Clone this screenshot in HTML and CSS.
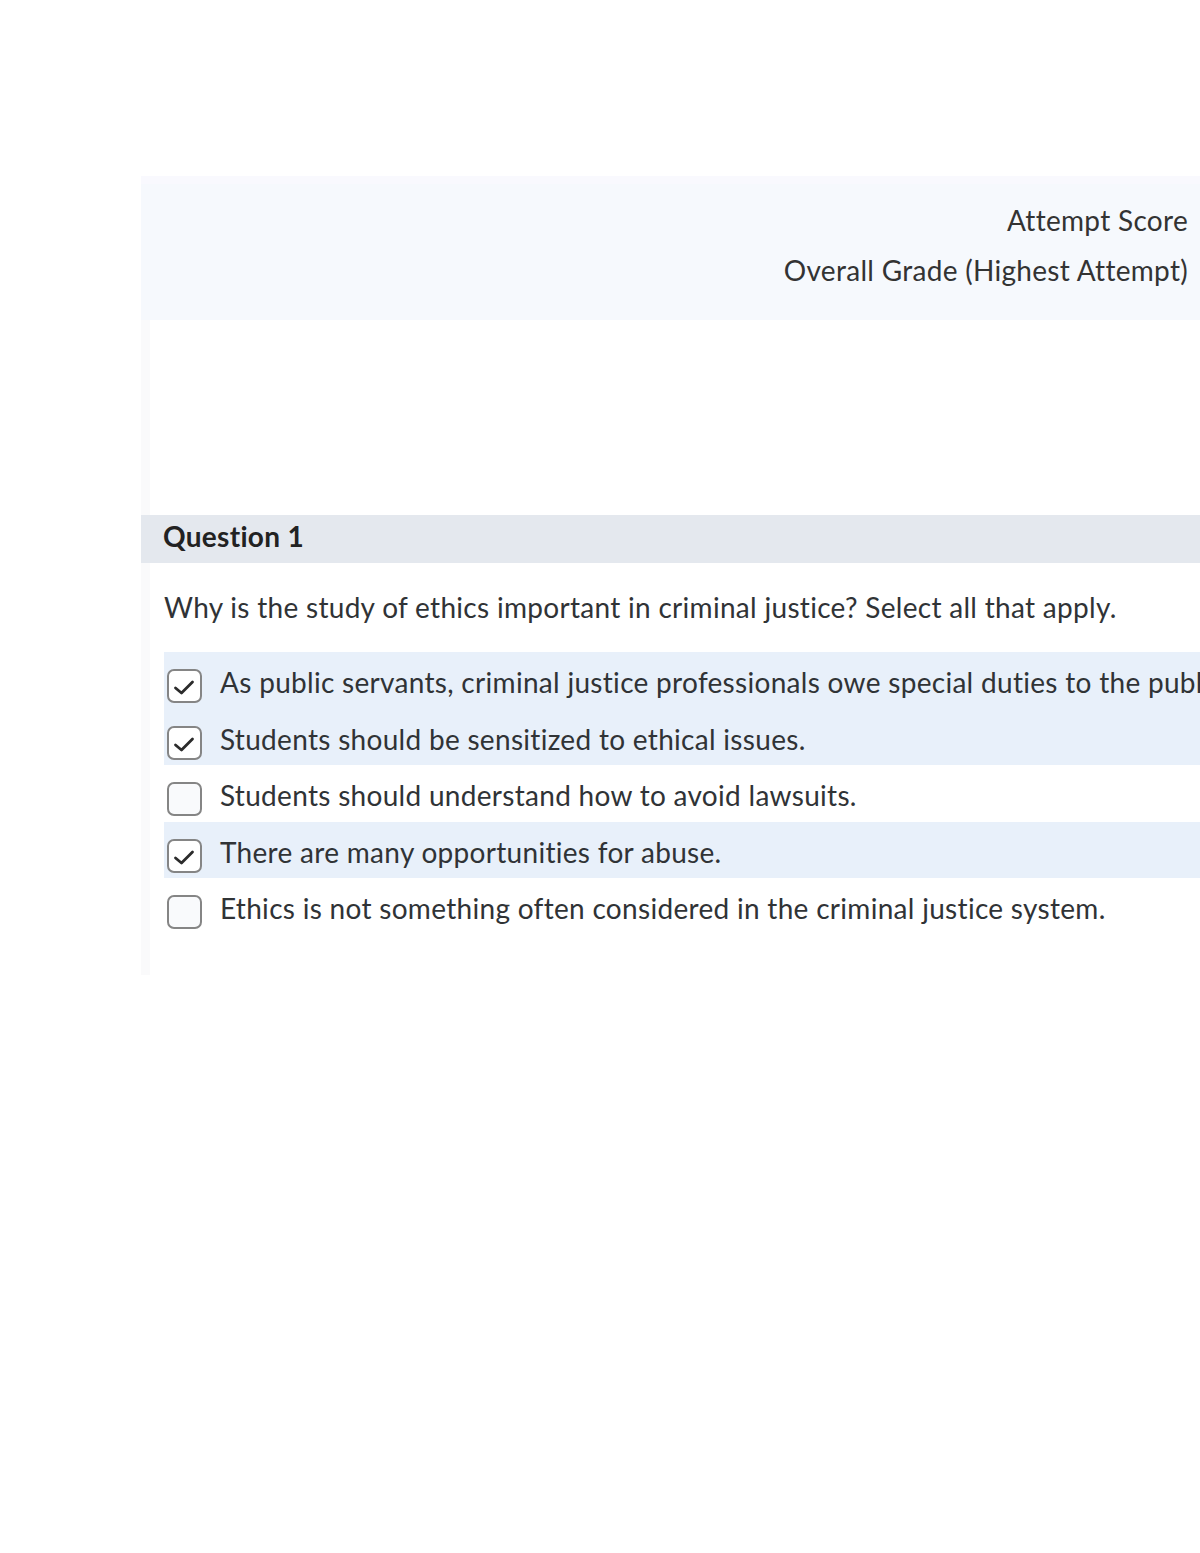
FILE: index.html
```html
<!DOCTYPE html>
<html lang="en">
<head>
<meta charset="utf-8">
<title>Quiz Attempt</title>
<link rel="stylesheet" href="styles.css">
</head>
<body>
<div class="page">
  <section class="summary">
    <div class="summary-label">Attempt Score</div>
    <div class="summary-label">Overall Grade (Highest Attempt)</div>
  </section>
  <section class="content">
    <div class="spacer"></div>
    <h2 class="q-header">Question 1</h2>
    <div class="q-body">
      <p class="q-text">Why is the study of ethics important in criminal justice? Select all that apply.</p>
      <ul class="options">
        <li class="option selected">
          <span class="box"><svg viewBox="0 0 35 34" width="35" height="34"><path d="M8.5 19 L14.5 24 L25.5 13" fill="none" stroke="#2b2b2b" stroke-width="2.8" stroke-linecap="round" stroke-linejoin="round"/></svg></span>
          <span class="label">As public servants, criminal justice professionals owe special duties to the public.</span>
        </li>
        <li class="option selected">
          <span class="box"><svg viewBox="0 0 35 34" width="35" height="34"><path d="M8.5 19 L14.5 24 L25.5 13" fill="none" stroke="#2b2b2b" stroke-width="2.8" stroke-linecap="round" stroke-linejoin="round"/></svg></span>
          <span class="label">Students should be sensitized to ethical issues.</span>
        </li>
        <li class="option">
          <span class="box empty"></span>
          <span class="label">Students should understand how to avoid lawsuits.</span>
        </li>
        <li class="option selected">
          <span class="box"><svg viewBox="0 0 35 34" width="35" height="34"><path d="M8.5 19 L14.5 24 L25.5 13" fill="none" stroke="#2b2b2b" stroke-width="2.8" stroke-linecap="round" stroke-linejoin="round"/></svg></span>
          <span class="label">There are many opportunities for abuse.</span>
        </li>
        <li class="option">
          <span class="box empty"></span>
          <span class="label">Ethics is not something often considered in the criminal justice system.</span>
        </li>
      </ul>
    </div>
  </section>
</div>
</body>
</html>
```
FILE: styles.css
```css
html, body {
  margin: 0;
  padding: 0;
  background: #ffffff;
  overflow: hidden;
}
body {
  font-family: Lato, "Open Sans", Arial, sans-serif;
  color: #303336;
}
.page {
  padding-top: 176px;
  padding-left: 141px;
  width: 1059px;
  overflow: hidden;
}
.summary {
  height: 144px;
  background: #f6f9fd;
  box-sizing: border-box;
  padding-top: 11px;
  padding-right: 12px;
  display: flex;
  flex-direction: column;
  align-items: flex-end;
  border-top: 8px solid #f9f9fe;
}
.summary-label {
  font-size: 28px;
  letter-spacing: 0.3px;
  line-height: 50px;
  color: #333;
}
.content {
  border-left: 9px solid #fafafb;
  padding-bottom: 40px;
}
.spacer {
  height: 195px;
}
.q-header {
  margin: 0 0 0 -9px;
  height: 48px;
  box-sizing: border-box;
  line-height: 43px;
  padding-bottom: 5px;
  background: #e4e8ee;
  font-size: 28px;
  font-weight: 700;
  letter-spacing: 0.3px;
  color: #222;
  padding-left: 22px;
}
.q-body {
  padding-left: 14px;
}
.q-text {
  margin: 28px 0 29px;
  font-size: 28px;
  letter-spacing: 0.3px;
  line-height: 32px;
  white-space: nowrap;
}
.options {
  list-style: none;
  margin: 0;
  padding: 0;
}
.option {
  height: 56.5px;
  display: flex;
  align-items: flex-start;
  white-space: nowrap;
}
.option.selected {
  background: #e8f0fa;
}
.box {
  flex: none;
  width: 35px;
  height: 34px;
  box-sizing: border-box;
  margin: 17px 18px 0 3px;
  border: 2px solid #858585;
  border-radius: 7px;
  background: #fff;
  position: relative;
}
.box svg {
  position: absolute;
  left: -2px;
  top: -2px;
}
.box.empty {
  background: #f9fafc;
}
.label {
  font-size: 28px;
  letter-spacing: 0.3px;
  line-height: 56px;
  margin-top: 2px;
}
```
